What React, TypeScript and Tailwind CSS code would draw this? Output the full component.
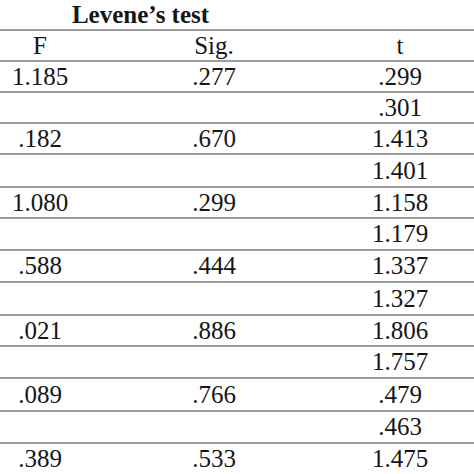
import React from "react";

type Row = { f: string; sig: string; t: string; h: string };

const rows: Row[] = [
  { f: "1.185", sig: ".277", t: ".299", h: "h-[31px]" },
  { f: "", sig: "", t: ".301", h: "h-[31px]" },
  { f: ".182", sig: ".670", t: "1.413", h: "h-[31px]" },
  { f: "", sig: "", t: "1.401", h: "h-[33px]" },
  { f: "1.080", sig: ".299", t: "1.158", h: "h-[31px]" },
  { f: "", sig: "", t: "1.179", h: "h-[32px]" },
  { f: ".588", sig: ".444", t: "1.337", h: "h-[32px]" },
  { f: "", sig: "", t: "1.327", h: "h-[33px]" },
  { f: ".021", sig: ".886", t: "1.806", h: "h-[31px]" },
  { f: "", sig: "", t: "1.757", h: "h-[32px]" },
  { f: ".089", sig: ".766", t: ".479", h: "h-[33px]" },
  { f: "", sig: "", t: ".463", h: "h-[32px]" },
  { f: ".389", sig: ".533", t: "1.475", h: "h-[32px]" },
];

function Line({ f, sig, t, h, bold }: { f: string; sig: string; t: string; h: string; bold?: boolean }) {
  return (
    <div className={`flex shrink-0 items-center border-t-2 border-[#9d9d9d] ${h}`}>
      <div className={`w-[80px] text-center ${bold ? "" : ""}`}>{f}</div>
      <div className="w-[268px] text-center">{sig}</div>
      <div className="w-[104px] text-center">{t}</div>
      <div className="flex-1" />
    </div>
  );
}

export default function App() {
  return (
    <div
      className="flex h-[474px] w-[474px] flex-col overflow-hidden bg-white text-[25px] text-[#161616]"
      style={{ fontFamily: '"Liberation Serif", "Times New Roman", serif' }}
    >
      <div className="flex h-[29px] shrink-0 items-start">
        <div className="w-[281px] text-center font-bold leading-[30px]">Levene’s test</div>
      </div>
      <Line f="F" sig="Sig." t="t" h="h-[31px]" />
      {rows.map((r, i) => (
        <Line key={i} f={r.f} sig={r.sig} t={r.t} h={r.h} />
      ))}
    </div>
  );
}
